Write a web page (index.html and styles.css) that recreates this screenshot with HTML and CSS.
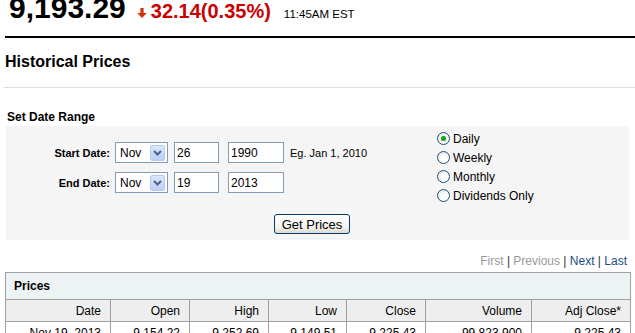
FILE: index.html
```html
<!DOCTYPE html>
<html>
<head>
<meta charset="utf-8">
<title>Historical Prices</title>
<link rel="stylesheet" href="styles.css">
</head>
<body>
<div class="quote">
  <span class="last">9,193.29</span>
  <svg class="arrow" width="10" height="10" viewBox="0 0 10 10"><path d="M3.4 0h3.2v5h3.2L5 10 0.2 5h3.2z" fill="#cc3311"/></svg>
  <span class="chg">32.14(0.35%)</span>
  <span class="time">11:45AM EST</span>
</div>
<div class="topline"></div>
<h1 class="title">Historical Prices</h1>
<div class="divider"></div>
<h2 class="section">Set Date Range</h2>
<form class="panel">
  <div class="dates">
    <div class="row">
      <label class="lbl">Start Date:</label>
      <span class="select">Nov<span class="dd"><svg width="9" height="6" viewBox="0 0 9 6"><path d="M1 1l3.5 3.5L8 1" fill="none" stroke="#4d6185" stroke-width="2"/></svg></span></span>
      <input class="field day" value="26">
      <input class="field year" value="1990">
      <span class="hint">Eg. Jan 1, 2010</span>
    </div>
    <div class="row">
      <label class="lbl">End Date:</label>
      <span class="select">Nov<span class="dd"><svg width="9" height="6" viewBox="0 0 9 6"><path d="M1 1l3.5 3.5L8 1" fill="none" stroke="#4d6185" stroke-width="2"/></svg></span></span>
      <input class="field day" value="19">
      <input class="field year" value="2013">
    </div>
  </div>
  <div class="freq">
    <label class="opt"><span class="radio on"></span>Daily</label>
    <label class="opt"><span class="radio"></span>Weekly</label>
    <label class="opt"><span class="radio"></span>Monthly</label>
    <label class="opt"><span class="radio"></span>Dividends Only</label>
  </div>
  <div class="actions"><button type="button" class="btn">Get Prices</button></div>
</form>
<div class="pager"><span class="off">First</span> | <span class="off">Previous</span> | <a class="lnk">Next</a> | <a class="lnk">Last</a></div>
<table class="prices">
  <colgroup><col class="c1"><col class="c2"><col class="c3"><col class="c4"><col class="c5"><col class="c6"><col class="c7"></colgroup>
  <tr class="cap"><th colspan="7">Prices</th></tr>
  <tr class="head"><th>Date</th><th>Open</th><th>High</th><th>Low</th><th>Close</th><th>Volume</th><th>Adj Close*</th></tr>
  <tr class="data"><td>Nov 19, 2013</td><td>9,154.22</td><td>9,252.69</td><td>9,149.51</td><td>9,225.43</td><td>99,823,900</td><td>9,225.43</td></tr>
</table>
</body>
</html>
```
FILE: styles.css
```css
html, body {
  margin: 0;
  padding: 0;
  background: #fff;
  overflow: hidden;
}
body {
  font-family: "Liberation Sans", Arial, sans-serif;
  color: #000;
  width: 635px;
  height: 333px;
}
.quote {
  display: flex;
  align-items: baseline;
  height: 30px;
  margin-top: -7px;
  padding-left: 9px;
  white-space: nowrap;
}
.last {
  font-size: 30px;
  line-height: 30px;
  font-weight: bold;
  color: #000;
}
.arrow {
  margin-left: 11px;
  flex: none;
}
.chg {
  font-size: 20px;
  line-height: 30px;
  font-weight: bold;
  color: #cc0000;
  margin-left: 4px;
}
.time {
  font-size: 11.5px;
  margin-left: 13px;
}
.topline {
  margin: 13px 0 0 5px;
  height: 2px;
  background: #000;
}
.title {
  margin: 14px 0 0 0;
  padding-left: 5px;
  font-size: 16px;
  line-height: 20px;
  font-weight: bold;
}
.divider {
  margin: 15px 0 0 4px;
  height: 1px;
  background: #dddddd;
}
.section {
  margin: 22px 0 0 0;
  padding-left: 7px;
  font-size: 12px;
  line-height: 14px;
  font-weight: bold;
}
.panel {
  margin: 2px 0 0 6px;
  width: 623px;
  height: 114px;
  box-sizing: border-box;
  padding: 3px 0 6px 0;
  background: #f5f5f5;
  display: grid;
  grid-template-columns: 431px 1fr;
  grid-template-rows: 76px 20px;
  row-gap: 9px;
}
.dates {
  padding-top: 13px;
  display: flex;
  flex-direction: column;
  gap: 9px;
}
.row {
  display: flex;
  align-items: center;
  height: 21px;
}
.lbl {
  width: 104px;
  text-align: right;
  font-size: 11px;
  font-weight: bold;
  margin-right: 5px;
}
.select {
  box-sizing: border-box;
  width: 53px;
  height: 21px;
  border: 1px solid #7f9db9;
  background: #fff;
  display: flex;
  align-items: center;
  justify-content: space-between;
  padding: 0 2px 0 4px;
  font-size: 12px;
}
.dd {
  width: 15px;
  height: 16px;
  box-sizing: border-box;
  border: 1px solid #b6c9f3;
  border-radius: 2px;
  background: linear-gradient(#dbe6fd, #bccffa);
  display: flex;
  align-items: center;
  justify-content: center;
}
.field {
  box-sizing: border-box;
  height: 21px;
  border: 1px solid #7f9db9;
  background: #fff;
  padding: 0 2px;
  margin: 0;
  font-family: "Liberation Sans", Arial, sans-serif;
  font-size: 12px;
  color: #000;
  outline: none;
}
.day {
  width: 45px;
  margin-left: 6px;
}
.year {
  width: 56px;
  margin-left: 9px;
}
.hint {
  margin-left: 6px;
  font-size: 11px;
}
.freq {
  display: flex;
  flex-direction: column;
}
.opt {
  display: flex;
  align-items: center;
  height: 19px;
  font-size: 12px;
}
.radio {
  box-sizing: border-box;
  width: 13px;
  height: 13px;
  border: 1px solid #1c5180;
  border-radius: 50%;
  background: radial-gradient(circle at 60% 65%, #fff 30%, #dcdad5 100%);
  margin-right: 3px;
  display: flex;
  align-items: center;
  justify-content: center;
}
.radio.on::after {
  content: "";
  width: 5px;
  height: 5px;
  border-radius: 50%;
  background: #21a121;
  box-shadow: 0 0 1px #5cd35c;
}
.actions {
  grid-column: 1 / 3;
  padding-left: 268px;
}
.btn {
  box-sizing: border-box;
  width: 76px;
  height: 20px;
  border: 1px solid #003c74;
  border-radius: 3px;
  background: linear-gradient(#ffffff, #f3f2ec 70%, #dcd8cc);
  font-family: "Liberation Sans", Arial, sans-serif;
  font-size: 13px;
  color: #000;
  padding: 0;
  margin: 0;
}
.pager {
  margin-top: 14px;
  text-align: right;
  padding-right: 8px;
  font-size: 12px;
  line-height: 14px;
  color: #333;
}
.off {
  color: #999999;
}
.lnk {
  color: #1a4b8c;
  text-decoration: none;
}
.prices {
  margin: 4px 0 0 5px;
  width: 625px;
  table-layout: fixed;
  border-collapse: collapse;
  font-size: 12px;
}
.c1 { width: 105px; }
.c2 { width: 79px; }
.c3 { width: 79px; }
.c4 { width: 78px; }
.c5 { width: 79px; }
.c6 { width: 106px; }
.c7 { width: 99px; }
.prices th, .prices td {
  border: 1px solid #a0a0a0;
  padding: 0 9px 0 0;
  text-align: right;
  font-weight: normal;
  white-space: nowrap;
}
.cap th {
  background: #edf2f5;
  text-align: left;
  font-weight: bold;
  padding-left: 8px;
  height: 26px;
}
.head th {
  background: #eeeeee;
  height: 21px;
}
.data td {
  height: 21px;
}
```
